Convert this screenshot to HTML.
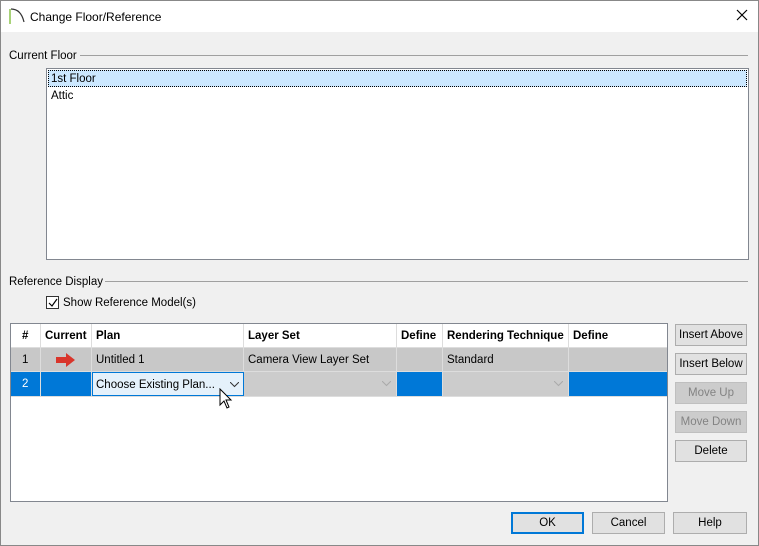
<!DOCTYPE html><html><head><style>
*{box-sizing:border-box}
body{margin:0;width:759px;height:546px;background:#f0f0f0;font-family:"Liberation Sans",sans-serif;font-size:11.5px;color:#000;position:relative;overflow:hidden}
.a{position:absolute}
.btn{position:absolute;background:#e1e1e1;border:1px solid #adadad;text-align:center;line-height:21px;font-size:11.5px}
.dis{color:#838383;background:#ccc;border-color:#bfbfbf}
.c{position:absolute;border-right:1px solid #ddd;height:100%;top:0;padding-left:4px;line-height:25px;white-space:nowrap;overflow:hidden}
.row{position:absolute;left:0;width:656px;height:24px}
</style></head><body>
<div class="a" style="left:0;top:0;width:759px;height:32px;background:#fff"></div>
<svg class="a" style="left:8px;top:6px" width="20" height="20"><path d="M2 18V3" stroke="#8bc34a" stroke-width="1.5" fill="none"/><path d="M3 3Q13 3 16 16" stroke="#333" stroke-width="1.2" fill="none"/></svg>
<div class="a" style="left:30px;top:10px;font-size:12px">Change Floor/Reference</div>
<svg class="a" style="left:736px;top:9px" width="12" height="12"><path d="M1 1L11 11M11 1L1 11" stroke="#000" stroke-width="1.2"/></svg>
<div class="a" style="left:9px;top:50px">Current Floor</div>
<div class="a" style="left:80px;top:55px;width:668px;height:1px;background:#a0a0a0"></div>
<div class="a" style="left:46px;top:68px;width:703px;height:192px;background:#fff;border:1px solid #828790"></div>
<div class="a" style="left:48px;top:70px;width:699px;height:17px;background:#cce8ff;border:1px dotted #000"></div>
<div class="a" style="left:51px;top:73px">1st Floor</div>
<div class="a" style="left:51px;top:90px">Attic</div>
<div class="a" style="left:9px;top:276px">Reference Display</div>
<div class="a" style="left:105px;top:281px;width:643px;height:1px;background:#a0a0a0"></div>
<div class="a" style="left:46px;top:296px;width:13px;height:13px;border:1px solid #333;background:#fff"></div>
<svg class="a" style="left:47px;top:297px" width="12" height="12"><path d="M2 6L5 9L10 2" stroke="#000" stroke-width="1.2" fill="none"/></svg>
<div class="a" style="left:63px;top:297px">Show Reference Model(s)</div>
<div class="a" style="left:10px;top:323px;width:658px;height:179px;background:#fff;border:1px solid #828790">
 <div class="row" style="top:0;font-weight:bold;border-bottom:1px solid #ddd">
  <div class="c" style="left:0;width:30px;padding-left:11px">#</div>
  <div class="c" style="left:30px;width:51px">Current</div>
  <div class="c" style="left:81px;width:152px">Plan</div>
  <div class="c" style="left:233px;width:153px">Layer Set</div>
  <div class="c" style="left:386px;width:46px">Define</div>
  <div class="c" style="left:432px;width:126px">Rendering Technique</div>
  <div class="c" style="left:558px;width:98px;border:0">Define</div>
 </div>
 <div class="row" style="top:24px;background:#c8c8c8;border-bottom:1px solid #ddd">
  <div class="c" style="left:0;width:30px;padding-left:11px">1</div>
  <div class="c" style="left:30px;width:51px"><svg style="position:absolute;left:15px;top:5px" width="20" height="14"><path d="M0 4H10V0L19 7L10 14V10H0Z" fill="#d9352b"/></svg></div>
  <div class="c" style="left:81px;width:152px">Untitled 1</div>
  <div class="c" style="left:233px;width:153px">Camera View Layer Set</div>
  <div class="c" style="left:386px;width:46px"></div>
  <div class="c" style="left:432px;width:126px">Standard</div>
 </div>
 <div class="row" style="top:48px;height:25px;border-bottom:1px solid #ddd">
  <div class="c" style="left:0;width:30px;padding-left:11px;background:#0078d7;color:#fff">2</div>
  <div class="c" style="left:30px;width:51px;background:#0078d7"></div>
  <div class="c" style="left:81px;width:152px;background:#e5f1fb;border:1px solid #0078d7;padding-left:3px;line-height:24px">Choose Existing Plan...<svg style="position:absolute;right:4px;top:9px" width="9" height="6"><path d="M0 0L4.5 4.5L9 0" stroke="#333" fill="none"/></svg></div>
  <div class="c" style="left:233px;width:153px;background:#ccc"><svg style="position:absolute;right:5px;top:9px" width="9" height="6"><path d="M0 0L4.5 4.5L9 0" stroke="#aaa" fill="none"/></svg></div>
  <div class="c" style="left:386px;width:46px;background:#0078d7"></div>
  <div class="c" style="left:432px;width:126px;background:#ccc"><svg style="position:absolute;right:5px;top:9px" width="9" height="6"><path d="M0 0L4.5 4.5L9 0" stroke="#aaa" fill="none"/></svg></div>
  <div class="c" style="left:558px;width:98px;background:#0078d7;border:0"></div>
 </div>
</div>
<svg class="a" style="left:219px;top:388px" width="14" height="22"><path d="M1 1V17L5 13L8 20L10 19L7 12H12Z" fill="#fff" stroke="#000"/></svg>
<div class="btn" style="left:675px;top:324px;width:72px;height:22px">Insert Above</div>
<div class="btn" style="left:675px;top:353px;width:72px;height:22px">Insert Below</div>
<div class="btn dis" style="left:675px;top:382px;width:72px;height:22px">Move Up</div>
<div class="btn dis" style="left:675px;top:411px;width:72px;height:22px">Move Down</div>
<div class="btn" style="left:675px;top:440px;width:72px;height:22px">Delete</div>
<div class="btn" style="left:511px;top:512px;width:73px;height:22px;border:2px solid #0078d7;line-height:19px">OK</div>
<div class="btn" style="left:592px;top:512px;width:73px;height:22px">Cancel</div>
<div class="btn" style="left:673px;top:512px;width:74px;height:22px">Help</div>
<div class="a" style="left:0;top:0;width:759px;height:546px;border:1px solid #888;pointer-events:none"></div>
</body></html>
